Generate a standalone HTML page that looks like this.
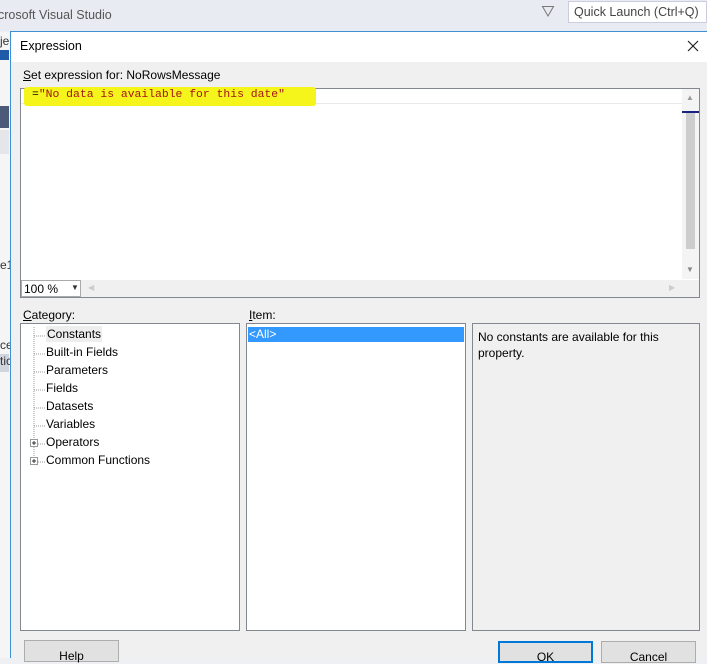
<!DOCTYPE html>
<html><head><style>
*{margin:0;padding:0;box-sizing:border-box}
body{width:707px;height:658px;overflow:hidden;background:#eef0f4;font-family:"Liberation Sans",sans-serif;font-size:12px;color:#000;position:relative}
.a{position:absolute}
.tree div{position:absolute;left:25px;height:16px;line-height:16px}
</style></head><body>
<div class="a" style="left:0;top:0;width:707px;height:31px;background:#e8ebf2"></div>
<div class="a" style="left:-2px;top:8px;color:#555;font-size:12.5px">crosoft Visual Studio</div>
<svg class="a" style="left:541px;top:4px" width="14" height="14"><path d="M1.5 2.5 H12.5 L7 12 Z" fill="none" stroke="#777" stroke-width="1"/></svg>
<div class="a" style="left:568px;top:1px;width:139px;height:22px;background:#fff;border:1px solid #ccd;color:#444;padding:3px 5px;font-size:12.5px">Quick Launch (Ctrl+Q)</div>
<div class="a" style="left:0;top:32px;width:10px;height:626px;background:#f5f5f5"></div>
<div class="a" style="left:0;top:34px;color:#333">je</div>
<div class="a" style="left:0;top:50px;width:9px;height:10px;background:#1e5aa8"></div>
<div class="a" style="left:0;top:106px;width:9px;height:22px;background:#4a5a78"></div>
<div class="a" style="left:0;top:130px;width:9px;height:24px;background:#e4e6ea"></div>
<div class="a" style="left:0;top:258px;color:#333">e1</div>
<div class="a" style="left:0;top:338px;color:#333">ce</div>
<div class="a" style="left:0;top:354px;width:9px;height:18px;background:#d0d4dc;color:#333">tic</div>
<div class="a" style="left:10px;top:31px;width:697px;height:627px;background:#f0f0f0;border:1px solid #3d8fd6;border-right:none;border-bottom:none"></div>
<div class="a" style="left:11px;top:32px;width:696px;height:30px;background:#fff"></div>
<div class="a" style="left:20px;top:39px;font-size:12.5px">Expression</div>
<svg class="a" style="left:687px;top:40px" width="12" height="12"><path d="M1 1L11 11M11 1L1 11" stroke="#222" stroke-width="1.2"/></svg>
<div class="a" style="left:23px;top:68px"><u>S</u>et expression for: NoRowsMessage</div>
<div class="a" style="left:20px;top:88px;width:680px;height:210px;background:#fff;border:1px solid #828790"></div>
<div class="a" style="left:21px;top:89px;width:661px;height:15px;border-bottom:1px solid #e8e8e8"></div>
<div class="a" style="left:24px;top:87px;width:292px;height:19px;background:#f5f51c;border-radius:3px"></div>
<div class="a" style="left:32px;top:89px;font-family:'Liberation Mono',monospace;font-size:11.4px;color:#a31515"><span style="color:#000">=</span>"No data is available for this date"</div>
<div class="a" style="left:682px;top:89px;width:17px;height:190px;background:#f4f4f4"></div>
<div class="a" style="left:686px;top:93px;color:#999;font-size:8px">▲</div>
<div class="a" style="left:686px;top:265px;color:#888;font-size:8px">▼</div>
<div class="a" style="left:686px;top:113px;width:9px;height:136px;background:#cdcdcd"></div>
<div class="a" style="left:682px;top:111px;width:17px;height:2px;background:#1a237e"></div>
<div class="a" style="left:21px;top:280px;width:678px;height:17px;background:#f0f0f0"></div>
<div class="a" style="left:21px;top:280px;width:60px;height:17px;background:#fff;border:1px solid #aaa;padding:1px 2px">100 %</div>
<div class="a" style="left:71px;top:283px;font-size:8px;color:#333">▼</div>
<div class="a" style="left:88px;top:283px;font-size:8px;color:#ccc">◀</div>
<div class="a" style="left:669px;top:283px;font-size:8px;color:#ccc">▶</div>
<div class="a" style="left:23px;top:308px"><u>C</u>ategory:</div>
<div class="a" style="left:249px;top:308px"><u>I</u>tem:</div>
<div class="a tree" style="left:20px;top:323px;width:220px;height:308px;background:#fff;border:1px solid #828790">
<div style="top:2px;background:#eee;padding:0 1px">Constants</div>
<div style="top:20px">Built-in Fields</div>
<div style="top:38px">Parameters</div>
<div style="top:56px">Fields</div>
<div style="top:74px">Datasets</div>
<div style="top:92px">Variables</div>
<div style="top:110px">Operators</div>
<div style="top:128px">Common Functions</div>
<svg style="position:absolute;left:8px;top:2px" width="18" height="140"><path d="M5 1V134M5 10H16M5 28H16M5 46H16M5 64H16M5 82H16M5 100H16M9 118H16M9 136H16" stroke="#999" stroke-dasharray="1 1" fill="none"/><rect x="1.5" y="113.5" width="7" height="7" fill="#fff" stroke="#999"/><path d="M3 117H7M5 115V119" stroke="#333"/><rect x="1.5" y="131.5" width="7" height="7" fill="#fff" stroke="#999"/><path d="M3 135H7M5 133V137" stroke="#333"/></svg>
</div>
<div class="a" style="left:246px;top:323px;width:220px;height:308px;background:#fff;border:1px solid #828790"></div>
<div class="a" style="left:248px;top:327px;width:216px;height:15px;background:#3399ff;color:#fff;padding-left:1px;line-height:15px">&lt;All&gt;</div>
<div class="a" style="left:472px;top:323px;width:228px;height:308px;background:#f0f0f0;border:1px solid #828790;padding:5px 5px;line-height:16px">No constants are available for this property.</div>
<div class="a" style="left:24px;top:640px;width:95px;height:22px;background:#e1e1e1;border:1px solid #adadad;text-align:center;padding-top:8px">Help</div>
<div class="a" style="left:498px;top:641px;width:95px;height:22px;background:#e1e1e1;border:2px solid #0078d7;text-align:center;padding-top:7px">OK</div>
<div class="a" style="left:601px;top:641px;width:95px;height:22px;background:#e1e1e1;border:1px solid #adadad;text-align:center;padding-top:8px">Cancel</div>
</body></html>
